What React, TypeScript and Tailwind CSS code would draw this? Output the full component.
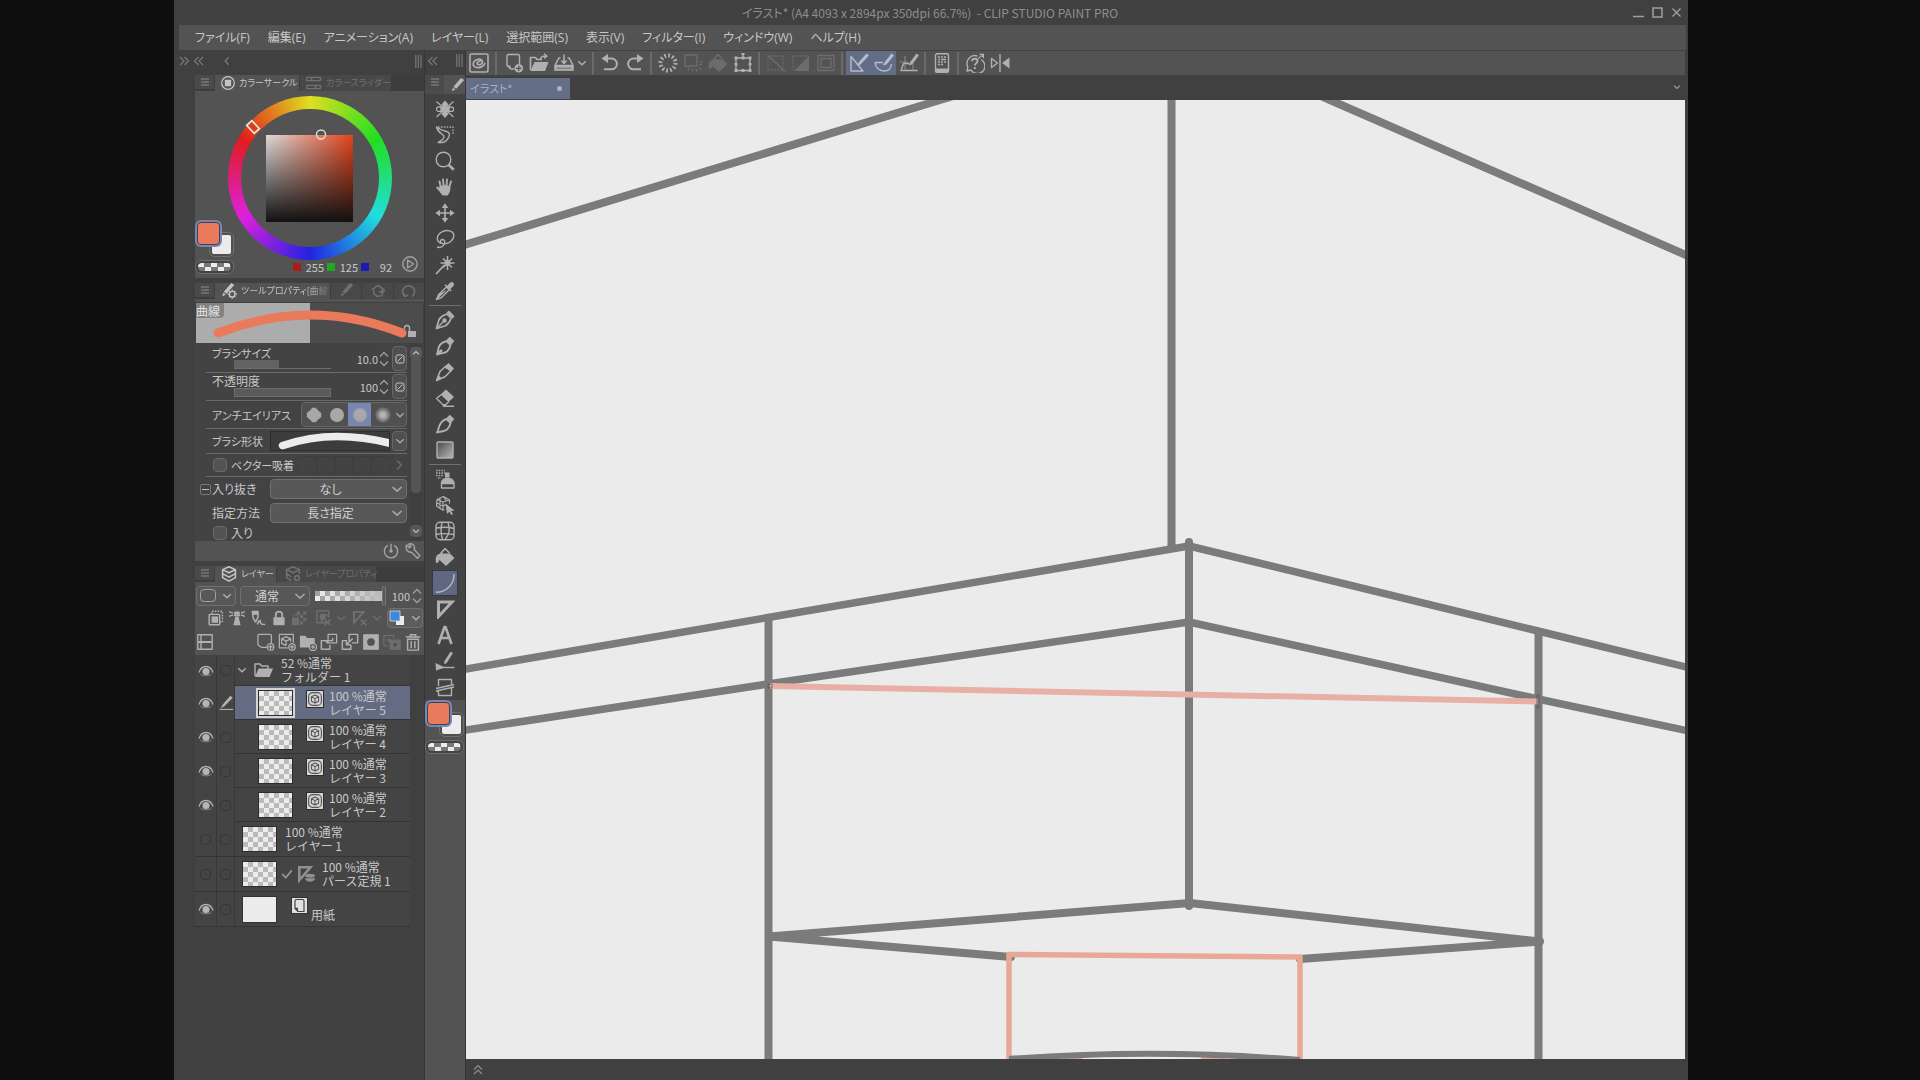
import React from "react";

type Kids = { children: React.ReactNode };

/* ---------- icon helpers ---------- */

function Ico({ children, className = "size-5" }: { children: React.ReactNode; className?: string }) {
  return (
    <svg viewBox="0 0 20 20" className={`shrink-0 ${className}`} fill="none" stroke="currentColor" strokeWidth="1.4" strokeLinejoin="round" aria-hidden="true">
      {children}
    </svg>
  );
}

const fill = { fill: "currentColor", stroke: "none" } as const;

function Chevron({ className = "size-3" }: { className?: string }) {
  return (
    <svg viewBox="0 0 12 12" className={`shrink-0 ${className}`} fill="none" stroke="currentColor" strokeWidth="1.6" aria-hidden="true">
      <path d="M1.5 4 6 8.2 10.5 4" />
    </svg>
  );
}

function DoubleChevron() {
  return (
    <svg viewBox="0 0 12 12" className="size-3" fill="none" stroke="currentColor" strokeWidth="1.2" aria-hidden="true">
      <path d="M5.5 2 1.5 6l4 4M10 2 6 6l4 4" />
    </svg>
  );
}

function Grip() {
  return (
    <svg viewBox="0 0 7 13" className="h-[13px] w-[7px]" fill="#6c6c6c" aria-hidden="true">
      <path d="M0 0h1.5v13H0zM2.6 0h1.5v13H2.6zM5.2 0h1.5v13H5.2z" />
    </svg>
  );
}

function MenuTile() {
  return (
    <button aria-label="メニュー" className="flex h-[14px] w-[19px] shrink-0 items-center justify-center bg-[#4a4a4a] text-[#8c8c8c]">
      <svg viewBox="0 0 8 8" className="size-2" stroke="currentColor" strokeWidth="1" aria-hidden="true">
        <path d="M0 1h8M0 4h8M0 7h8" />
      </svg>
    </button>
  );
}

/* ---------- icons ---------- */

const tb = {
  clip: (
    <Ico>
      <rect x="1" y="1" width="18" height="18" rx="1.5" strokeWidth="1.6" />
      <path d="M11.8 8.400c-1.600-.6-3.800.6-3.600 2.100.3 1.800 3.800 1.600 5-.2 1.400-2.500-1.300-4.600-4.300-4C5.700 7 3.600 9.600 4.300 12c.8 2.800 4.800 3.300 8 1.900 1.900-.8 3.300-2.200 3.700-4" strokeWidth="1.700" />
    </Ico>
  ),
  newPage: (
    <Ico>
      <path d="M10.500 16H7l-4-3.500V3c0-.8.5-1.500 1.500-1.500H14c1 0 1.500.6 1.500 1.500v8" />
      <path d="M3 12.500h3.500v4z" {...fill} />
      <circle cx="14.800" cy="15.300" r="4.300" {...fill} />
      <path d="M14.800 12.500v5.600M12 15.300h5.600" stroke="#535353" strokeWidth="1.200" />
    </Ico>
  ),
  open: (
    <Ico>
      <path d="M1.500 17V4.500h5l1.500 2h5" strokeWidth="1.700" />
      <path d="M1.500 18 5.500 9H19.500l-3.500 9z" {...fill} />
      <path d="M11 7c.5-3 2.500-4 5.500-4M15 .8 18 3l-3 2.400" />
    </Ico>
  ),
  save: (
    <Ico>
      <path d="M6.500 5H4.800L1 12.500h18L15.200 5h-1.700M10 1.500V10M7.300 7.500 10 10.500l2.700-3" strokeWidth="1.600" />
      <path d="M.2 12.500h19.600v5.300H.2z" {...fill} />
      <path d="M2.500 15.200h15" stroke="#6a6a6a" strokeWidth="1" />
    </Ico>
  ),
  undo: (
    <Ico>
      <path d="M3 5.500h8.500a5.300 5.300 0 0 1 0 10.800H4" strokeWidth="1.900" />
      <path d="M1.500 5.500 8 1v9z" {...fill} />
    </Ico>
  ),
  redo: (
    <Ico>
      <path d="M17 5.500H8.500a5.300 5.300 0 0 0 0 10.800H16" strokeWidth="1.900" />
      <path d="M18.500 5.500 12 1v9z" {...fill} />
    </Ico>
  ),
  clear: (
    <Ico>
      <circle cx="10" cy="10" r="7.500" strokeWidth="4" strokeDasharray="1.700 2.230" />
    </Ico>
  ),
  clearOut: (
    <Ico>
      <rect x="2" y="2" width="12" height="11" />
      <path d="M18.500 8v2M16.500 12l2.500-.8M16 15l2 1.500M13 15.500l1 3M9.500 15.500v2.500M6 15l-1 2" />
    </Ico>
  ),
  bucket: (
    <Ico>
      <path d="M5.500 8.500 5.800 6.500 10 1.500l4.500 4.500" strokeWidth="1.600" />
      <path d="M5.500 6.500h9.500l4.500 4.500-8.500 8-7-6.500z" {...fill} />
      <path d="M5.500 6.500C.5 7.500.3 11 1 16c1 .3 2.500-.5 3.500-3z" {...fill} />
    </Ico>
  ),
  transform: (
    <Ico>
      <rect x="3" y="5" width="14" height="12.500" />
      <path d="M10 5V1" />
      <path d="M1.500 3.500h3v3h-3zM15.500 3.500h3v3h-3zM1.500 16h3v3h-3zM15.500 16h3v3h-3zM8.500 3.500h3v3h-3zM8.500 0h3v2h-3zM1.500 10h3v2.500h-3zM15.500 10h3v2.500h-3zM8.500 16h3v3h-3z" {...fill} />
    </Ico>
  ),
  deselect: (
    <Ico>
      <rect x="2" y="3" width="15" height="14" strokeDasharray="1.500 1.500" />
      <path d="M1.500 2 19 18.500" />
    </Ico>
  ),
  invert: (
    <Ico>
      <path d="M2 17V3h14" strokeDasharray="1.500 1.500" />
      <path d="M18 3v15H3z" {...fill} />
    </Ico>
  ),
  border: (
    <Ico>
      <rect x="2" y="2.500" width="16" height="15" />
      <rect x="5" y="5.500" width="10" height="9" />
    </Ico>
  ),
  snapRuler: (
    <Ico>
      <path d="M2 3.500v14.500h12zM8 11l1.500 1.500" />
      <path d="M17.500.5 20 2.500 11.500 11.500 9.500 13l-.3-3z" {...fill} />
    </Ico>
  ),
  snapSpecial: (
    <Ico>
      <path d="M1 9.500h8M1 9.500c.5 5.500 4.500 8.500 9 8.500 4.200 0 7-2.500 7.500-7" />
      <path d="M17.500.5 20 2.500 12.500 11.500 9 12.500l1.200-2.800z" {...fill} />
    </Ico>
  ),
  snapGrid: (
    <Ico>
      <path d="M6 3v14M14 9v9M1 9h8" strokeWidth=".6" />
      <path d="M10 10.500H4.500L2 17.500h16.500" />
      <path d="M17.500.5 20 2.500 13 11.500l-3.500 1 1.200-2.800z" {...fill} />
    </Ico>
  ),
  tablet: (
    <Ico>
      <rect x="3.500" y=".8" width="13" height="18.400" rx="1.500" />
      <path d="M3.500 15.500h13v3.700h-13z" {...fill} />
      <path d="M6 4h2M9 4h2M12 4h2M6 6.500h2M9 6.500h5M6 9h2M9 9h2M12 9h2M6 11.500h2M9 11.500h2" strokeWidth="1.700" />
    </Ico>
  ),
  help: (
    <Ico>
      <path d="M16 6.500A7.500 7.500 0 1 1 6 17L2 18l.8-4.200A7.700 7.700 0 0 1 12.500 3.200" />
      <path d="M7 8.200C7 5 12.500 5 12.500 8.200c0 2-2.700 2-2.700 4.200M9.800 14v1.900" strokeWidth="1.900" />
      <path d="M19 .8v5l-5-5zM13.500 6.200 17 2.800l-.8-.8-3.500 3.400z" {...fill} />
    </Ico>
  ),
  mirror: (
    <Ico>
      <path d="M1.500 5.500v9L7.500 10zM10 1v18" />
      <path d="M19.500 4.500v11L12 10z" {...fill} />
    </Ico>
  ),
};

const tools: Record<string, React.ReactNode> = {
  操作: (
    <Ico>
      <path d="M1.500 2.500 18.500 18M18.500 2.500 1.500 18" strokeWidth="1.200" />
      <path d="M10 1.500 13.500 5.500 12 7.500h3l1.500 2.700-1.500 2.700h-3l1.500 2.100L10 19l-3.500-4L8 12.900H5l-1.500-2.700L5 7.500h3L6.500 5.500z" {...fill} />
      <circle cx="3.800" cy="10.200" r="2.300" fill="#434343" strokeWidth="1.200" /><circle cx="16.200" cy="10.200" r="2.300" fill="#434343" strokeWidth="1.200" />
    </Ico>
  ),
  レイヤー移動: (
    <Ico>
      <path d="M3 2H18v8" strokeDasharray="1.500 1.400" />
      <path d="M1.500 2c3 2.500 5.500 3.500 9 4.200 3.500.6 4.500 2 3.500 5.300-1 3-4 6-7 6H3C7.500 15 9.500 13.500 9 11.500 8.500 9 3 8.500 1.500 2z" />
    </Ico>
  ),
  虫めがね: (
    <Ico>
      <circle cx="8.500" cy="8.500" r="7.300" />
      <path d="m13.500 13.800 5.300 5" strokeWidth="2.600" />
    </Ico>
  ),
  手のひら: (
    <Ico>
      <path d="M5.800 10.500 4.500 4.500M8.600 9.500 8 2.500M11.500 9.500l.5-7M14 10.500l2-6M6 14.500l-3.800-4" strokeWidth="1.900" strokeLinecap="round" />
      <path d="M4.500 9.500 10 8l5.500 1.500c0 4-.8 6.500-2.800 9H8c-2-1.500-3-3.500-4.500-6z" {...fill} />
    </Ico>
  ),
  移動: (
    <Ico>
      <path d="M10 3v14M3 10h14" strokeWidth="1.600" />
      <path d="M10 .3 13.300 5H6.700zM10 19.700 13.300 15H6.700zM.3 10 5 6.700v6.600zM19.700 10 15 6.700v6.600z" {...fill} />
    </Ico>
  ),
  投げ縄: (
    <Ico>
      <path d="M6 14.500C.5 12 1.500 5.500 7 2.800c5-2.500 11.500-1 11.800 3.500C19 11 14 15.500 8.500 14.800 5 14.300 4.500 11 7 10.500c2.500-.4 3.500 2.500 2 5C7.500 18 5 19 2 18" />
    </Ico>
  ),
  自動選択: (
    <Ico>
      <path d="m1 19 8.500-9" strokeWidth="1.800" />
      <path d="M12.500 1v14M5.500 8h14M8 3.500l9 9M17 3.500l-9 9" strokeWidth="1.500" />
      <circle cx="12.500" cy="8" r="3" {...fill} />
    </Ico>
  ),
  スポイト: (
    <Ico>
      <path d="M11.500 6 3.500 13.800 1.500 18.500l4.800-1.800 8-8z" />
      <path d="M12 9 4 16.500l-2 1.500 2-5z" {...fill} />
      <path d="M10 3.800 16.200 10M12.500 5.500 15.800 2c1.500-1 3 .8 2.300 2.300l-3.500 3.500z" fill="currentColor" />
    </Ico>
  ),
  ペン: (
    <Ico>
      <path d="M1.500 18.500 4 9.500C6 6.500 9 4.800 12 4l4 4.200c-1 3.300-2.500 5.500-5.500 7.500z" strokeWidth="1.700" />
      <path d="m2 18 7-7" /><circle cx="9.500" cy="10.500" r="1.500" fill="currentColor" />
      <path d="M11.500 2.500 14 .5l5.500 5.700-2 2.500z" {...fill} />
    </Ico>
  ),
  鉛筆: (
    <Ico>
      <path d="M2 18.500C3.500 15.500 2.500 12 5 8.800 6.500 6.800 9.500 5.500 11.500 5l4 4c-.5 2.500-1.500 5-3.500 6.500-3 2.200-6.500 1.500-10 3z" strokeWidth="1.900" />
      <path d="M11.500 4 14.800.8 19.300 5l-3 3.800z" {...fill} />
      <path d="m2 18.500 5-4.500" strokeWidth="2.500" />
    </Ico>
  ),
  筆: (
    <Ico>
      <path d="M1.500 18.500 5 9.500 11 4l5 4.700-6 6z" strokeWidth="1.600" />
      <path d="M9.500 5 13.500 1 19 6.500l-3.500 3.700C14.500 8 12.500 8.500 12.500 7 10.500 7.500 11 5.500 9.500 5z" {...fill} />
      <path d="m1.500 18.500 2-5.500 3.500 3.500z" {...fill} />
    </Ico>
  ),
  消しゴム: (
    <Ico>
      <path d="M11 1.500 19 9l-5.500 5L5.500 6.500z" {...fill} />
      <path d="M6 6.800 1.500 10.500l6.500 6.300h2.500L14 13.500M8 18.300h11" />
    </Ico>
  ),
  色混ぜ: (
    <Ico>
      <path d="M2 18.500C4 15.500 3.500 12 6 8.800 7.500 6.800 9.500 5.500 11.500 5l4 4c-.5 2.500-1.500 5-3.500 6.500-3 2.200-6.500 2-10 3z" strokeWidth="1.900" />
      <path d="M11.500 4 14.800.8 19.300 5l-3 3.800z" {...fill} />
    </Ico>
  ),
  グラデーション: (
    <Ico>
      <defs>
        <linearGradient id="toolGrad" x1="0" y1="0" x2="1" y2="1">
          <stop offset="0" stopColor="#4a4a4a" /><stop offset="1" stopColor="#b8b8b8" />
        </linearGradient>
      </defs>
      <rect x="2" y="2" width="16" height="16" rx="1" fill="url(#toolGrad)" />
    </Ico>
  ),
  エアブラシ: (
    <Ico>
      <path d="M1 1.500h9M1 4h9M1 6.500h7M3 9h3" strokeDasharray="1.500 1.200" />
      <path d="M10 3.500h4.500v5H10z" {...fill} />
      <path d="M6.500 19v-5c0-2.500 2-4.500 6-4.500s6.500 2 6.500 4.500v5zM6.500 14.500H19" />
      <path d="M7 14c0-2.500 2-4.500 5.500-4.500S18.500 11.500 18.500 14z" {...fill} />
    </Ico>
  ),
  "3D操作": (
    <Ico>
      <path d="M14.500 8.500V5L8.500 1.500 2 4.500 1.500 11l6 4h2M2 4.500l6 2.500 6-2M8 7v8M5 3v9.500M2 8l6 3 3-1.500M8.500 1.500 11.500 6" strokeWidth="1.200" />
      <path d="M10.500 8.500 19.500 15.500l-3.500.5 2 3-1.800 1-1.800-3.200-2.400 2.200z" {...fill} />
    </Ico>
  ),
  メッシュ変形: (
    <Ico>
      <rect x="1" y="1.200" width="18" height="17.600" rx="4" />
      <path d="M7 1.500c-1 4-1 12 .5 17M13 1.500C15 7 15 13 10 18.500M1 7c6-1 12-1.500 18 .5M1 13.500c6-1.500 12-1 18 0" />
    </Ico>
  ),
  塗りつぶし: tb.bucket,
  図形: (
    <Ico className="size-6 bg-[#5f6880] outline outline-[#33384a]">
      <path d="M17.500 2.500c.5 8-6 15-15 15.200" stroke="#b4b8c0" strokeWidth="1.200" />
    </Ico>
  ),
  定規: (
    <Ico>
      <path d="M3.500 3H17L3.500 17.500z" strokeWidth="3" strokeLinejoin="miter" />
    </Ico>
  ),
  テキスト: (
    <Ico>
      <path d="M3.500 19 9.500 2h1l6 17M5.700 13h8.600" strokeWidth="2.600" />
    </Ico>
  ),
  線修正: (
    <Ico>
      <path d="M2 16.500h17.500" />
      <path d="m.5 12 9.500 4.500-9 3zM15.500.8l2.500 1.300-6.500 10.200L9 13l.5-3z" {...fill} />
    </Ico>
  ),
  コマ枠: (
    <Ico>
      <path d="M3.500 9V2.500h13V7M3.500 13v5.500h13V11M1 11.500l18-4M1 14l18-4" />
    </Ico>
  ),
};

const toolGroups = [
  ["操作", "レイヤー移動", "虫めがね", "手のひら", "移動", "投げ縄", "自動選択", "スポイト"],
  ["ペン", "鉛筆", "筆", "消しゴム", "色混ぜ", "グラデーション"],
  ["エアブラシ", "3D操作", "メッシュ変形", "塗りつぶし", "図形", "定規", "テキスト", "線修正", "コマ枠"],
];

/* ---------- shared bits ---------- */

function Swatches() {
  return (
    <div className="relative h-[54px] w-10">
      <button aria-label="サブカラー" className="absolute top-3 left-[14px] size-[25px] rounded-md border border-[#707070] bg-[#505050] p-[2px]">
        <span className="block size-full rounded-xs bg-[#ececec]" />
      </button>
      <button aria-label="メインカラー" className="absolute top-0 left-0 size-[27px] rounded-md bg-[#7886b2] p-[2px]">
        <span className="block size-full rounded-sm border border-[#3c4254] bg-[#ea7a5c]" />
      </button>
      <button aria-label="透明色" className="absolute bottom-0 left-0 flex h-[14px] w-[39px] items-center justify-center rounded-md border border-[#6e6e6e] bg-[#444]">
        <span className="block h-2 w-[33px] rounded-sm bg-[#ececec] bg-[conic-gradient(#777_25%,transparent_0_50%,#777_0_75%,transparent_0)] bg-[length:13px_8px]" />
      </button>
    </div>
  );
}

function Checker({ className = "" }: { className?: string }) {
  return (
    <span
      className={`block bg-[#ececec] bg-[conic-gradient(#bababa_25%,transparent_0_50%,#bababa_0_75%,transparent_0)] bg-[length:10px_10px] ${className}`}
    />
  );
}

function TabBar({ children }: Kids) {
  return <div className="flex h-4 gap-px overflow-hidden bg-[#3d3d3d]">{children}</div>;
}

function Tab({ active = false, className = "", children }: { active?: boolean; className?: string; children?: React.ReactNode }) {
  return (
    <button
      className={`flex shrink-0 items-center gap-1 px-1.5 text-[9px] leading-4 whitespace-nowrap [font-feature-settings:'palt'] ${
        active ? "bg-[#535353] text-[#c4c4c4]" : "bg-[#484848] text-[#707070]"
      } ${className}`}
    >
      {children}
    </button>
  );
}

function Spin() {
  return (
    <svg viewBox="0 0 10 16" className="h-4 w-2.5 shrink-0 text-[#a0a0a0]" fill="none" stroke="currentColor" strokeWidth="1.300" aria-hidden="true">
      <path d="M1 5.500 5 1.500l4 4M1 10.500l4 4 4-4" />
    </svg>
  );
}

function Select({ label, value, className = "" }: { label: string; value: string; className?: string }) {
  return (
    <div className={`relative flex h-5 ${className}`}>
      <select aria-label={label} defaultValue={value} className="h-5 w-full appearance-none rounded-sm border border-[#707070] bg-[#585858] pr-5 pl-1 text-center text-[12px] leading-[18px] text-[#d0d0d0] [text-align-last:center]">
        <option>{value}</option>
      </select>
      <Chevron className="pointer-events-none absolute top-1 right-1 size-3 text-[#a8a8a8]" />
    </div>
  );
}

/* ---------- left panels ---------- */

function ColorPanel() {
  return (
    <section>
      <TabBar>
        <MenuTile />
        <Tab active className="w-[84px]">
          <Ico className="size-[14px]">
            <circle cx="10" cy="10" r="9" strokeWidth="1.800" />
            <rect x="5.500" y="5.500" width="9" height="9" rx="1" {...fill} />
          </Ico>
          カラーサークル
        </Tab>
        <Tab className="w-[91px]">
          <Ico className="size-4">
            <path d="M1 3h17v4H1zM1 13h17v4H1zM7 3v4M12 13v4" strokeWidth="1.800" />
          </Ico>
          カラースライダー
        </Tab>
      </TabBar>
      <div className="relative bg-[#535353] pt-[5px] pb-1">
        <div className="relative mx-auto size-[164px] rounded-full bg-[conic-gradient(from_-60deg,#e01c1c,#dfdf20_60deg,#22de22_120deg,#20dede_180deg,#2222e0_240deg,#de20de_300deg,#e01c1c)] p-[13px]">
          <div className="flex size-full items-center justify-center rounded-full bg-[#535353]">
            <div className="size-[87px] bg-[linear-gradient(to_top,#111,transparent),linear-gradient(to_right,#dcdcdc,#e3421a)]" />
          </div>
          <svg viewBox="0 0 164 164" className="absolute inset-0 size-full" fill="none" aria-hidden="true">
            <circle cx="93" cy="38.500" r="4.500" stroke="#ddd" strokeWidth="1.400" />
            <rect x="-5.500" y="-3.500" width="11" height="7" transform="translate(25 31) rotate(47)" stroke="#e8e8e8" strokeWidth="1.700" fill="#d8401c" />
          </svg>
        </div>
        <div className="flex h-[14px] items-center justify-end gap-[3px] pr-8 text-[11px] leading-[14px] text-[#c8c8c8]">
          <span className="size-2 bg-[#a81c1c]" />
          <span className="w-5 text-right">255</span>
          <span className="size-2 bg-[#22a822]" />
          <span className="w-5 text-right">125</span>
          <span className="size-2 bg-[#1c1cb4]" />
          <span className="w-5 text-right">92</span>
        </div>
        <div className="absolute bottom-1 left-0"><Swatches /></div>
        <button aria-label="再生" className="absolute right-1.5 bottom-1.5 text-[#a0a0a0]">
          <Ico className="size-4">
            <circle cx="10" cy="10" r="9" strokeWidth="1.800" />
            <path d="M7 5v10l7.500-5z" strokeWidth="1.800" />
          </Ico>
        </button>
      </div>
    </section>
  );
}

function PenSmall() {
  return (
    <Ico className="size-4">
      <path d="M15 0 19 2.500 9 13.500 5.500 11zM5 12l3 2.500-4.500 2z" {...fill} />
    </Ico>
  );
}

function SliderRow({ label, value, labelClass, sliderClass }: { label: string; value: string; labelClass: string; sliderClass: string }) {
  return (
    <div className="flex h-7 items-center border-b border-[#6a6a6a] pl-1.5">
      <div className="flex-1 pb-0.5">
        <span className={`block leading-[14px] ${labelClass}`}>{label}</span>
        <input
          type="range"
          aria-label={label}
          className={`ml-[22px] block h-[9px] w-[97px] appearance-none border-b border-[#6e6e6e] [&::-webkit-slider-thumb]:size-0 [&::-webkit-slider-thumb]:appearance-none ${sliderClass}`}
        />
      </div>
      <input aria-label={`${label}の値`} defaultValue={value} className="w-9 bg-transparent text-right text-[11px] leading-4" />
      <span className="ml-px"><Spin /></span>
      <button aria-label={`${label}影響元設定`} className="ml-[3px] flex h-[25px] w-[15px] items-center justify-center rounded-sm border border-[#666] bg-[#4f4f4f]">
        <Ico className="size-[10px]">
          <rect x="2" y="2" width="16" height="16" rx="3" strokeWidth="2" />
          <path d="M5 15 15 5" strokeWidth="2" />
        </Ico>
      </button>
    </div>
  );
}

function ToolPropertyPanel() {
  const check = "size-[14px] shrink-0 appearance-none rounded-sm border border-[#6a6a6a] bg-[#535353]";
  return (
    <section>
      <TabBar>
        <MenuTile />
        <Tab active className="w-[115px]">
          <Ico className="size-4">
            <path d="M13 0 16.500 2.500 7 13.500 3.500 11zM3 12l3 2.500L1.500 17z" {...fill} />
            <circle cx="14" cy="14" r="3.500" strokeWidth="1.800" />
            <path d="M14 8v2.500M14 17.500V20M8 14h2.500M17.500 14H20M10 10l1.500 1.500M18 10l-1.500 1.500M10 18l1.500-1.500M18 18l-1.500-1.500" strokeWidth="1.500" />
          </Ico>
          <span className="[mask-image:linear-gradient(to_right,black_75%,#0003)]">ツールプロパティ[曲線</span>
        </Tab>
        <Tab className="w-[30px] justify-center"><PenSmall /></Tab>
        <Tab className="w-[31px] justify-center">
          <Ico className="size-4"><path d="M2 9 10 3l8 6-3 3M5 9v5l5 3 3-1M11 11h7M15 8v9" strokeWidth="2" /></Ico>
        </Tab>
        <Tab className="flex-1 justify-center">
          <Ico className="size-4"><path d="M5 17a7.500 7.500 0 1 1 9 0M5 17l-1-4M5 17l4-2" strokeWidth="2" /></Ico>
        </Tab>
      </TabBar>
      <div className="h-1 border-b border-[#404040] bg-[#535353]" />
      <div className="relative mx-px h-10 bg-[#4c4c4c]">
        <div className="h-full w-1/2 bg-[#acacac]">
          <span className="block w-fit rounded-br-sm bg-[#828282] pr-1 text-[12px] leading-[15px] text-[#e4e4e4]">曲線</span>
        </div>
        <svg viewBox="0 0 227 40" className="absolute inset-0 size-full" fill="none" aria-hidden="true">
          <path d="M22 30Q115-6 206 30" stroke="#ea7a5c" strokeWidth="9" strokeLinecap="round" />
          <path d="M212 28h8v6h-8z" fill="#b0b0b0" />
          <path d="M213.500 28v-3a2.500 2.500 0 0 0-5 0v1" stroke="#b0b0b0" strokeWidth="1.400" />
        </svg>
      </div>
      <div className="flex h-[198px] overflow-hidden bg-[#434343] text-[#c8c8c8] [font-feature-settings:'palt']">
        <div className="w-[212px] shrink-0 pl-[11px]">
          <div className="h-0.5" />
          <SliderRow label="ブラシサイズ" value="10.0" labelClass="text-[11px]" sliderClass="bg-[linear-gradient(to_right,#626262_46%,transparent_46%)]" />
          <SliderRow label="不透明度" value="100" labelClass="text-[12px]" sliderClass="border border-[#6e6e6e] bg-[#5a5a5a]" />
          <div className="flex h-7 items-center border-b border-[#6a6a6a] pl-1.5">
            <span className="flex-1 text-[11px] leading-4 whitespace-nowrap">アンチエイリアス</span>
            <div className="flex h-[25px] items-center rounded-sm border border-[#666] bg-[#505050] text-[#a8a8a8]">
              <button aria-label="無し" className="flex w-[23px] justify-center">
                <Ico className="size-4"><path d="M7 1h6v2h2v2h2v2h2v6h-2v2h-2v2h-2v2H7v-2H5v-2H3v-2H1V7h2V5h2V3h2z" {...fill} /></Ico>
              </button>
              <button aria-label="弱" className="flex w-[23px] justify-center"><span className="size-[14px] rounded-full bg-[#a8a8a8]" /></button>
              <button aria-label="中" className="flex h-full w-[23px] items-center justify-center bg-[#7886b2]"><span className="size-[14px] rounded-full bg-[radial-gradient(#a8a8a8_50%,#8a93ac)]" /></button>
              <button aria-label="強" className="flex w-[23px] justify-center"><span className="size-4 rounded-full bg-[radial-gradient(#b4b4b4_20%,#505050_75%)]" /></button>
              <Chevron className="mx-px size-[10px]" />
            </div>
          </div>
          <div className="flex h-[25px] items-center border-b border-[#6a6a6a] pl-1.5">
            <span className="w-[58px] text-[11px] leading-4 whitespace-nowrap">ブラシ形状</span>
            <svg viewBox="0 0 119 20" className="h-5 min-w-0 flex-1 border border-[#2f2f2f] bg-[#3c3c3c]" preserveAspectRatio="none" fill="none" aria-hidden="true">
              <path d="M12 15Q62-4 122 13" stroke="#ececec" strokeWidth="8.500" strokeLinecap="round" />
            </svg>
            <button aria-label="ブラシ形状を選ぶ" className="ml-0.5 flex h-5 w-[15px] items-center justify-center rounded-sm border border-[#666] bg-[#505050] text-[#a8a8a8]">
              <Chevron className="size-[10px]" />
            </button>
          </div>
          <div className="flex h-[23px] items-center border-b border-[#6a6a6a] pl-[7px]">
            <label className="flex flex-1 items-center gap-1 text-[11px] leading-4 whitespace-nowrap">
              <input type="checkbox" className={check} />ベクター吸着
            </label>
            <div className="flex h-[18px] w-[94px] divide-x divide-[#3a3a3a] border border-[#3e3e3e]">
              <i className="flex-1" /><i className="flex-1" /><i className="flex-1" /><i className="flex-1" /><i className="flex-1" />
            </div>
            <Chevron className="mx-0.5 size-3 -rotate-90 text-[#6a6a6a]" />
          </div>
          <div className="-ml-1.5 flex h-6 items-center">
            <button aria-label="折りたたむ" className="mr-px flex size-[11px] items-center justify-center rounded-xs border border-[#777]">
              <span className="h-px w-[7px] bg-[#bbb]" />
            </button>
            <span className="w-[58px] text-[12px] leading-4">入り抜き</span>
            <Select label="入り抜き" value="なし" className="flex-1" />
          </div>
          <div className="flex h-6 items-center pl-1.5">
            <span className="w-[58px] text-[12px] leading-4">指定方法</span>
            <Select label="指定方法" value="長さ指定" className="flex-1" />
          </div>
          <label className="flex items-center gap-1 pl-[7px] text-[12px] leading-4">
            <input type="checkbox" className={check} />入り
          </label>
        </div>
        <div className="ml-[3px] flex w-3 flex-col items-center justify-between bg-[#3f3f3f] py-1">
          <span className="flex size-3 items-center justify-center rounded-sm bg-[#585858]"><Chevron className="size-2 rotate-180" /></span>
          <span className="mb-8 w-[10px] flex-1 rounded-b bg-[#555]" />
          <span className="flex size-3 items-center justify-center rounded-sm bg-[#585858]"><Chevron className="size-2" /></span>
        </div>
      </div>
      <div className="flex h-5 items-center justify-end gap-1.5 bg-[#535353] pr-[3px] text-[#a4a4a4]">
        <Ico className="size-4"><path d="M6 3A8.300 8.300 0 1 0 14 3M10 1v9" strokeWidth="1.700" /><circle cx="10" cy="10" r="2.200" {...fill} /></Ico>
        <Ico className="size-4">
          <path d="M2 2.500 5.500 6l2-2L4.500 1.500C9-.5 13 3.500 11.500 8l7 7.500-3 3.500-7.500-7.500C4 12.500 0 8 2 2.500z" strokeWidth="1.800" />
        </Ico>
      </div>
    </section>
  );
}

function Eye() {
  return (
    <svg viewBox="0 0 16 12" className="h-3 w-4 text-[#b4b4b4]" fill="none" stroke="currentColor" strokeWidth="1.300" aria-hidden="true">
      <path d="M1 7.500C2.500 3 5 1.500 8 1.500s5.500 1.500 7 6" />
      <circle cx="8" cy="6.500" r="3.600" {...fill} />
      <path d="M2.500 9c1.500 1.200 3 1.800 5.500 1.800s4-.6 5.500-1.800" strokeWidth=".6" />
    </svg>
  );
}

function Box() {
  return <span className="size-[11px] rounded-sm border border-[#363636]" />;
}

function Cube() {
  return (
    <span className="flex size-[18px] shrink-0 items-center justify-center border border-[#2e2e2e] bg-[#d4d4d4] text-[#555]">
      <Ico className="size-4">
        <rect x="2" y="2" width="16" height="16" rx="5" strokeWidth="1.400" />
        <path d="m10 5 4.500 2.200v5.600L10 15l-4.500-2.200V7.200zM5.500 7.200 10 9.500l4.500-2.300M10 9.500V15" strokeWidth="1.300" />
      </Ico>
    </span>
  );
}

type Layer = {
  name: string;
  mode?: string;
  visible?: boolean;
  kind: "folder" | "child" | "plain" | "ruler" | "paper";
  selected?: boolean;
};

const layers: Layer[] = [
  { name: "フォルダー 1", mode: "52 %通常", visible: true, kind: "folder" },
  { name: "レイヤー 5", mode: "100 %通常", visible: true, kind: "child", selected: true },
  { name: "レイヤー 4", mode: "100 %通常", visible: true, kind: "child" },
  { name: "レイヤー 3", mode: "100 %通常", visible: true, kind: "child" },
  { name: "レイヤー 2", mode: "100 %通常", visible: true, kind: "child" },
  { name: "レイヤー 1", mode: "100 %通常", kind: "plain" },
  { name: "パース定規 1", mode: "100 %通常", kind: "ruler" },
  { name: "用紙", visible: true, kind: "paper" },
];

const rowStyle = {
  folder: "h-[31px] pl-0.5",
  child: "h-[34px] pl-[23px]",
  plain: "h-[35px] pl-[7px]",
  ruler: "h-[35px] pl-[7px]",
  paper: "h-[35px] pl-[7px]",
};

const textMargin = { folder: "ml-2", child: "", plain: "ml-2", ruler: "ml-[7px]", paper: "mt-3 ml-[3px]" };

function LayerRow({ layer }: { layer: Layer }) {
  const { kind, selected } = layer;
  const nested = kind === "child" || kind === "folder";
  return (
    <li className="flex text-[12px] leading-[14px] text-[#c8c8c8]">
      <button aria-label={`${layer.name}の表示`} className={`flex w-[21px] items-center justify-center ${nested ? "" : "border-b border-[#343434]"}`}>
        {layer.visible ? <Eye /> : <Box />}
      </button>
      <span className={`flex w-[19px] items-center justify-center border-x border-[#383838] ${nested ? "" : "border-b border-b-[#343434]"}`}>
        {selected ? (
          <Ico className="size-4 text-[#b4b4b4]"><path d="M2 18h17" /><path d="M15.500 1 18.500 3.500 8 14l-5 2.500L6 12z" {...fill} /></Ico>
        ) : (
          <Box />
        )}
      </span>
      <div className={`flex min-w-0 flex-1 items-center border-b border-[#343434] whitespace-nowrap ${rowStyle[kind]} ${selected ? "bg-[#646c84]" : ""}`}>
        {kind === "folder" && (
          <>
            <Chevron className="size-[10px] text-[#b0b0b0]" />
            <Ico className="ml-1.5 size-5 text-[#b0b0b0]">
              <path d="M2 16V4h5l1.500 2H15v3" /><path d="M2 17 5.500 8.500H20L16.500 17z" {...fill} />
            </Ico>
          </>
        )}
        {kind === "paper" && <span className="h-[27px] w-[35px] shrink-0 border border-[#333] bg-[#ececec]" />}
        {kind !== "paper" && kind !== "folder" && (
          <Checker className={`h-[26px] w-[35px] shrink-0 border border-[#2c2c2c] ${selected ? "outline-2 outline-[#d4d4d4]" : ""}`} />
        )}
        {kind === "child" && <span className="mr-[5px] mb-2 ml-[13px]"><Cube /></span>}
        {kind === "ruler" && (
          <span className="ml-1 flex items-center text-[#909090]">
            <Ico className="size-3"><path d="m2 10 6 6L18 4" strokeWidth="3" /></Ico>
            <Ico className="ml-1 size-[18px]">
              <path d="M2.500 2.500h12.500L2.500 17z" strokeWidth="2.800" strokeLinejoin="miter" />
              <ellipse cx="14.500" cy="12" rx="5.500" ry="2.200" {...fill} /><path d="M9 14.800h11c0 5-11 5-11 0z" {...fill} />
            </Ico>
          </span>
        )}
        {kind === "paper" && (
          <span className="mb-2 ml-[14px] flex size-[17px] items-center justify-center border border-[#333] bg-[#e0e0e0] text-[#444]">
            <Ico className="size-[15px]"><path d="M6 2h8c1 0 2 .8 2 2v14H8l-4-4V4c0-1.200.8-2 2-2z" strokeWidth="1.600" /><path d="M4 13h4v5z" {...fill} /></Ico>
          </span>
        )}
        <span className={textMargin[kind]}>
          {layer.mode && <>{layer.mode}<br /></>}
          {layer.name}
        </span>
      </div>
    </li>
  );
}

function LayerPanel() {
  const dim = "text-[#6e6e6e]";
  return (
    <section>
      <TabBar>
        <MenuTile />
        <Tab active className="w-[61px]">
          <Ico className="size-4"><path d="m10 1 8 3.500-8 4-8-4zM2 4.500v10l8 4.500 8-4.500v-10M2 9.500l8 4.500 8-4.500" strokeWidth="1.900" /></Ico>
          レイヤー
        </Tab>
        <Tab className="w-[99px] pl-2">
          <Ico className="size-4"><path d="m10 1 8 3.500-8 4-8-4zM2 4.500v10l6 4M2 9.500l6 4M18 5v5" strokeWidth="1.900" /><circle cx="15" cy="15" r="3" strokeWidth="2" /></Ico>
          レイヤープロパティ
        </Tab>
      </TabBar>
      <div className="bg-[#535353] pt-[3px] text-[#b0b0b0]">
        <div className="flex h-[21px] items-center pl-px">
          <button aria-label="パレットカラー" className="flex h-5 w-10 items-center justify-around rounded-sm border border-[#707070] bg-[#585858]">
            <span className="h-[13px] w-4 rounded-sm border border-[#a0a0a0]" />
            <Chevron className="size-[10px]" />
          </button>
          <Select label="合成モード" value="通常" className="ml-1 w-[70px]" />
          <div className="ml-[5px] flex items-center">
            <span className="h-2.5 w-[67px] bg-[linear-gradient(to_right,transparent,#bcbcbc),conic-gradient(#ececec_25%,#a0a0a0_0_50%,#ececec_0_75%,#a0a0a0_0)] bg-[length:100%_100%,10px_10px]" />
            <span className="h-5 w-1 rounded-sm border border-[#777] bg-[#585858]" />
          </div>
          <input aria-label="不透明度" defaultValue="100" className="w-6 bg-transparent text-right text-[11px] leading-4 text-[#c8c8c8]" />
          <span className="ml-0.5"><Spin /></span>
        </div>
        <div className="flex h-[23px] items-center pl-[13px]">
          <button aria-label="下のレイヤーでクリッピング" className="w-[21px]"><Ico className="size-4"><path d="M5 5V1.500h13V15h-3" strokeDasharray="2 1.500" strokeWidth="1.800" /><rect x="1.500" y="5.500" width="13" height="13" rx="1" strokeWidth="1.800" /><path d="M4.500 8h8v8h-8z" {...fill} /></Ico></button>
          <button aria-label="参照レイヤー" className="w-[21px]"><Ico className="size-4"><path d="M7 2h6l1 4H6zM8 8h4l2.500 11h-9z" {...fill} /><path d="M5 4 0 2M5 6 0 8M15 4l5-2M15 6l5 2M6 7h8" strokeWidth="1.600" /></Ico></button>
          <button aria-label="下描きレイヤー" className="w-[21px]"><Ico className="size-4"><path d="M3 2h7v7l-3 6-3-5zM9 18c3-6 4-6 4-3s2 3 6 3" strokeWidth="1.900" /><path d="M3 2h7v4H3z" {...fill} /></Ico></button>
          <button aria-label="レイヤーをロック" className="w-[21px]"><Ico className="size-4"><path d="M3 9h14v10H3z" {...fill} /><path d="M6 9V6a4 4 0 0 1 8 0v3" strokeWidth="2.200" /></Ico></button>
          <button aria-label="透明ピクセルをロック" className={`w-[21px] ${dim}`}><Ico className="size-4"><path d="M0 10h9v9H0zM6 2h4v4H6zM14 2h4v4h-4zM10 6h4v4h-4zM14 10h4v4h-4zM10 14h4v4h-4z" {...fill} /><path d="M2 10V7.500a2.500 2.500 0 0 1 5 0V10" /></Ico></button>
          <button aria-label="マスクを有効化" className={`flex w-9 items-center justify-center gap-1 ${dim}`}>
            <Ico className="size-4"><path d="M1 1h15v8a5 5 0 1 0-4 7H1z" strokeWidth="1.800" /><circle cx="8.500" cy="8.500" r="4" {...fill} /><path d="m11 12 7 7M18 12l-7 7" strokeWidth="2" /></Ico><Chevron className="size-[10px]" />
          </button>
          <button aria-label="定規の表示範囲" className={`flex w-9 items-center justify-center gap-1 ${dim}`}>
            <Ico className="size-4"><path d="M2.500 2.500h12L2.500 16z" strokeWidth="2.600" strokeLinejoin="miter" /><path d="m11 12 7 7M18 12l-7 7" strokeWidth="2" /></Ico><Chevron className="size-[10px]" />
          </button>
          <button aria-label="レイヤーカラー" className="ml-0.5 flex h-5 w-9 items-center justify-center gap-1.5 rounded-sm border border-[#707070] bg-[#5c5c5c]">
            <svg viewBox="0 0 16 16" className="size-4" aria-hidden="true"><path d="M7 6h8v9H7z" fill="#ececec" /><path d="M1 1h10v10H1z" fill="#3f87dc" stroke="#ddd" strokeWidth=".8" /></svg>
            <Chevron className="size-[10px]" />
          </button>
        </div>
        <div className="flex h-[26px] items-center gap-[3px] pr-0.5 pl-0.5">
          <button aria-label="パネル分割" className="mr-auto"><Ico className="size-4"><path d="M1 1h18v8.500H1zM1 10.500h18V19H1zM5 1v18" strokeWidth="1.700" /></Ico></button>
          <button aria-label="新規ラスターレイヤー"><Ico className="size-[18px]"><path d="M11 16H5l-4-3V3c0-1 .5-1.500 1.500-1.500h12c1 0 1.500.5 1.500 1.500v8" /><circle cx="15" cy="15.500" r="3.600" /><path d="M15 13v5M12.500 15.500h5" /></Ico></button>
          <button aria-label="新規ベクターレイヤー"><Ico className="size-[18px]"><path d="M11 16.500H1.500v-15H17v9" /><path d="m9 4 5 2.500v3M9 4 4 6.500v5L9 14M4 6.500 9 9l5-2.500M9 9v5" /><circle cx="15.500" cy="15.500" r="3.600" /><path d="M15.500 13v5M13 15.500h5" /></Ico></button>
          <button aria-label="新規レイヤーフォルダー"><Ico className="size-[18px]"><path d="M1 3h6l2 2.500h8.500V16H1z" {...fill} /><circle cx="15.500" cy="15.500" r="4" fill="#535353" /><path d="M15.500 13v5M13 15.500h5" /></Ico></button>
          <button aria-label="下のレイヤーに転写"><Ico className="size-[18px]"><rect x="9" y="1.500" width="9.500" height="9.500" /><path d="M7 8.500H1.500V18H11v-5M14 5.500v3H6M9 11.500l-3-3" strokeWidth="1.600" /></Ico></button>
          <button aria-label="下のレイヤーに結合"><Ico className="size-[18px]"><path d="M9 9V1.500h9.500V11H12M7 8.500H1.500V18H11v-5M13 6 6.500 12.500M6 8.500v4.500h4.500" strokeWidth="1.600" /></Ico></button>
          <button aria-label="レイヤーマスクを作成"><Ico className="size-[18px]"><path d="M2 2h16v16H2zM10 5a5 5 0 1 0 0 10 5 5 0 0 0 0-10z" fill="currentColor" fillRule="evenodd" /></Ico></button>
          <button aria-label="マスクをレイヤーに適用" className={dim}><Ico className="size-[18px]"><path d="M5 14H1V3h11v3M3 8h5M6 6l2 2-2 2" /><path d="M8 8h11v10H8zm5.500 2a3 3 0 1 0 0 6 3 3 0 0 0 0-6z" fill="currentColor" fillRule="evenodd" /></Ico></button>
          <button aria-label="レイヤーを削除"><Ico className="size-[18px]"><path d="M2 4.500h16M7 4.500V2h6v2.500M4 7h12v12H4zM8 9v8M12 9v8" strokeWidth="1.600" /></Ico></button>
        </div>
      </div>
      <ul className="w-[215px] bg-[#444]">
        {layers.map((l) => <LayerRow key={l.name} layer={l} />)}
      </ul>
    </section>
  );
}

/* ---------- canvas ---------- */

function Canvas() {
  return (
    <div className="min-h-0 flex-1 overflow-hidden bg-[#ebebeb]">
      <svg viewBox="0 0 1219 960" preserveAspectRatio="xMidYMin slice" className="size-full" fill="none" role="img" aria-label="イラスト">
        <g stroke="#7b7b7b" strokeWidth="8" strokeLinejoin="round">
          <path d="M-10 147.500 0 144.500 474 0 507-10M841-10 864 0 1220 155l23 10" />
          <path d="M705.500 0v447" />
          <path d="M-10 571 0 569l302-51.500L723 446l349 85 148 36 10 2" strokeWidth="7.500" />
          <path d="M-10 632 0 630l302-46 421-62 349 77 148 31.500 10 2" strokeWidth="7.500" />
          <path d="M723 442v364" strokeLinecap="round" />
          <path d="M302.500 518v442M1072.500 531v429" />
          <path d="M545 857 303 836.500 724 803l350 38.500-240 17.500" strokeLinecap="round" />
        </g>
        <g stroke="#e8a898" strokeWidth="5.500">
          <path d="M304 586 1072 601.500" stroke="#e8b0a4" strokeWidth="6" />
          <path d="M543 960V854.500L834 857v103" strokeLinejoin="round" />
          <path d="M598 960h18M735 960h24" />
        </g>
        <path d="M543 959Q690 948 834 960" stroke="#7b7b7b" strokeWidth="6" />
        <path d="M302 584h4v4h-4zM1071 595h2v13h-2z" stroke="#555" strokeWidth=".8" />
      </svg>
    </div>
  );
}

/* ---------- toolbar ---------- */

function TB({ label, tone = "text-[#b0b0b0]", children }: { label: string; tone?: string; children: React.ReactNode }) {
  return (
    <button aria-label={label} className={`flex h-full w-[25px] shrink-0 items-center justify-center ${tone}`}>
      {children}
    </button>
  );
}

function Sep({ className = "mx-[3px]" }: { className?: string }) {
  return <span className={`h-[23px] w-0.5 shrink-0 bg-[#6a6a6a] ${className}`} />;
}

function Toolbar() {
  const dim = "text-[#6c6c6c]";
  const on = "text-[#b8bcc8] bg-[#646d88]";
  return (
    <div className="flex h-[26px] shrink-0 items-center border-y border-[#424242] bg-[#535353]">
      <TB label="CLIP STUDIO">{tb.clip}</TB>
      <Sep className="mr-1 ml-1" />
      <TB label="新規">{tb.newPage}</TB>
      <TB label="開く">{tb.open}</TB>
      <TB label="保存">{tb.save}</TB>
      <Chevron className="mx-px size-[10px] text-[#b0b0b0]" />
      <Sep className="mr-[3px] ml-1" />
      <TB label="取り消し">{tb.undo}</TB>
      <TB label="やり直し">{tb.redo}</TB>
      <Sep />
      <TB label="消去">{tb.clear}</TB>
      <TB label="選択範囲外を消去" tone={dim}>{tb.clearOut}</TB>
      <TB label="塗りつぶし" tone={dim}>{tb.bucket}</TB>
      <TB label="拡大・縮小・回転">{tb.transform}</TB>
      <Sep />
      <TB label="選択を解除" tone={dim}>{tb.deselect}</TB>
      <TB label="選択範囲を反転" tone={dim}>{tb.invert}</TB>
      <TB label="選択範囲の境界線" tone={dim}>{tb.border}</TB>
      <Sep />
      <TB label="定規にスナップ" tone={on}>{tb.snapRuler}</TB>
      <TB label="特殊定規にスナップ" tone={on}>{tb.snapSpecial}</TB>
      <TB label="グリッドにスナップ">{tb.snapGrid}</TB>
      <Sep />
      <TB label="コンパニオンモード">{tb.tablet}</TB>
      <Sep />
      <TB label="サポート">{tb.help}</TB>
      <TB label="左右反転">{tb.mirror}</TB>
    </div>
  );
}

const menus = ["ファイル(F)", "編集(E)", "アニメーション(A)", "レイヤー(L)", "選択範囲(S)", "表示(V)", "フィルター(I)", "ウィンドウ(W)", "ヘルプ(H)"];

export default function App() {
  return (
    <div className="flex h-screen overflow-hidden bg-[#0f0f0f] pr-[232px] pl-[174px] font-['Noto_Sans_CJK_JP',sans-serif]">
      <div className="flex min-w-0 flex-1 flex-col bg-[#404040] pr-0.5">
        <header className="flex h-[25px] shrink-0 items-center">
          <h1 className="flex-1 pl-28 text-center text-[12px] leading-[26px] whitespace-pre text-[#8e8e8e] font-['Noto_Sans_CJK_JP',sans-serif] [font-feature-settings:'palt']">
            {"イラスト* (A4 4093 x 2894px 350dpi 66.7%)  - CLIP STUDIO PAINT PRO"}
          </h1>
          <div className="flex w-28 items-center justify-end gap-2 pr-1 text-[#a0a0a0]">
            <button aria-label="最小化"><svg viewBox="0 0 11 11" className="size-[11px]" stroke="currentColor" strokeWidth="1.500"><path d="M0 9.500h11" /></svg></button>
            <button aria-label="最大化"><svg viewBox="0 0 11 11" className="size-[11px]" fill="none" stroke="currentColor" strokeWidth="1.500"><path d="M1 1h9v9H1z" /></svg></button>
            <button aria-label="閉じる"><svg viewBox="0 0 11 11" className="size-[11px]" stroke="currentColor" strokeWidth="1.300"><path d="m1.500 1.500 8 8M9.500 1.500l-8 8" /></svg></button>
          </div>
        </header>
        <nav className="ml-[5px] flex h-[25px] shrink-0 items-center gap-[18px] bg-[#535353] pl-4 text-[12px] leading-[25px] text-[#c8c8c8] font-['Open_Sans','Noto_Sans_CJK_JP',sans-serif] [font-feature-settings:'palt']">
          {menus.map((m) => <button key={m} className="whitespace-nowrap">{m}</button>)}
        </nav>
        <main className="flex min-h-0 flex-1">
          <aside className="flex w-[251px] shrink-0 flex-col border-r border-[#363636] pl-[21px]">
            <div className="-ml-[17px] flex h-[25px] shrink-0 items-center pb-1 pt-px text-[#787878]">
              <span className="flex -scale-x-100"><DoubleChevron /></span>
              <span className="ml-[3px]"><DoubleChevron /></span>
              <span className="ml-[17px]"><Chevron className="size-[10px] rotate-90" /></span>
              <span className="ml-auto pr-0.5"><Grip /></span>
            </div>
            <div className="flex flex-col gap-[5px]">
              <ColorPanel />
              <ToolPropertyPanel />
              <LayerPanel />
            </div>
          </aside>
          <aside className="flex w-[41px] shrink-0 flex-col border-r border-[#363636] bg-[#535353]">
            <div className="flex h-[25px] shrink-0 items-center justify-between bg-[#404040] px-0.5 pb-1 text-[#787878]">
              <DoubleChevron />
              <Grip />
            </div>
            <div className="flex h-[19px] shrink-0 bg-[#4c4c4c] text-[#b8b8b8]">
              <MenuTile />
              <span className="flex flex-1 items-end justify-end bg-[#535353]"><PenSmall /></span>
            </div>
            <div className="flex flex-col bg-[#434343] pt-0.5 text-[#b0b0b0]">
              {toolGroups.map((group, i) => (
                <div key={group[0]}>
                  {i > 0 && <hr className="mx-1 my-px border-[#707070]" />}
                  {group.map((name) => (
                    <button key={name} aria-label={name} className="flex h-[26px] w-full items-center justify-center">
                      {tools[name]}
                    </button>
                  ))}
                </div>
              ))}
            </div>
            <Swatches />
          </aside>
          <div className="flex min-w-0 flex-1 flex-col pr-px">
            <Toolbar />
            <div className="flex h-6 shrink-0 items-end justify-between pb-px text-[#a0a0a0]">
              <button className="flex h-[21px] w-[104px] items-center justify-between bg-[#646e86] pr-2 pl-1 text-[11px] text-[#aab2c2] [font-feature-settings:'palt']">
                イラスト*<span className="size-[5px] rounded-full bg-[#b0b4be]" />
              </button>
              <Chevron className="mr-1 mb-2 size-2" />
            </div>
            <Canvas />
            <footer className="flex h-[21px] shrink-0 items-center pl-1.5 text-[#909090]">
              <span className="rotate-90"><DoubleChevron /></span>
            </footer>
          </div>
        </main>
      </div>
    </div>
  );
}
